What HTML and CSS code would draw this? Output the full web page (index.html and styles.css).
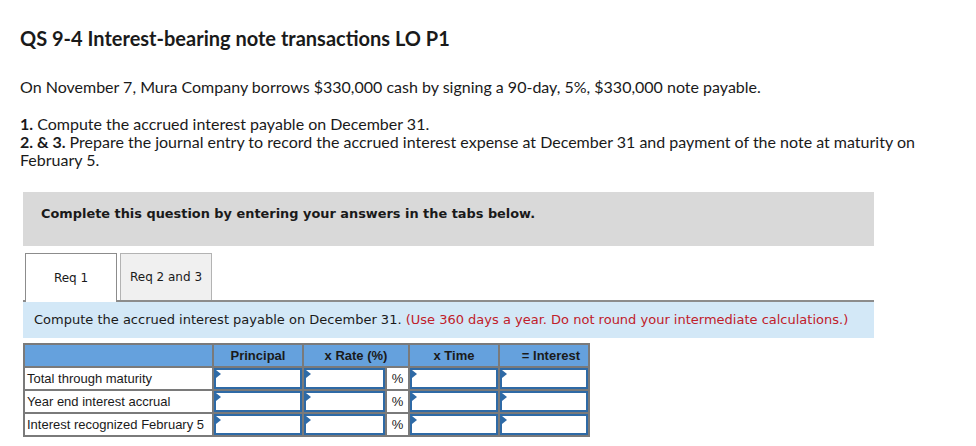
FILE: index.html
```html
<!DOCTYPE html>
<html>
<head>
<meta charset="utf-8">
<link rel="stylesheet" href="styles.css">
</head>
<body>
<div class="page">
  <h1 class="title">QS 9-4 Interest-bearing note transactions LO P1</h1>
  <p class="intro">On November 7, Mura Company borrows $330,000 cash by signing a 90-day, 5%, $330,000 note payable.</p>
  <div class="reqs">
    <p><b>1.</b> Compute the accrued interest payable on December 31.</p>
    <p><b>2. &amp; 3.</b> Prepare the journal entry to record the accrued interest expense at December 31 and payment of the note at maturity on February 5.</p>
  </div>
  <div class="box">
    <div class="banner">Complete this question by entering your answers in the tabs below.</div>
    <div class="tabs">
      <div class="tab active">Req 1</div>
      <div class="tab">Req 2 and 3</div>
    </div>
    <div class="instr">Compute the accrued interest payable on December 31. <span class="red">(Use 360 days a year. Do not round your intermediate calculations.)</span></div>
    <table class="calc">
      <colgroup>
        <col class="c-lbl">
        <col class="c-in">
        <col class="c-rate">
        <col class="c-pct">
        <col class="c-in">
        <col class="c-in">
      </colgroup>
      <tr class="head">
        <th></th>
        <th>Principal</th>
        <th colspan="2">x Rate (%)</th>
        <th>x Time</th>
        <th class="eq">= Interest</th>
      </tr>
      <tr>
        <td class="lbl">Total through maturity</td>
        <td class="in"></td>
        <td class="in"></td>
        <td class="pct">%</td>
        <td class="in"></td>
        <td class="in"></td>
      </tr>
      <tr>
        <td class="lbl">Year end interest accrual</td>
        <td class="in"></td>
        <td class="in"></td>
        <td class="pct">%</td>
        <td class="in"></td>
        <td class="in"></td>
      </tr>
      <tr>
        <td class="lbl">Interest recognized February 5</td>
        <td class="in"></td>
        <td class="in"></td>
        <td class="pct">%</td>
        <td class="in"></td>
        <td class="in"></td>
      </tr>
    </table>
  </div>
</div>
</body>
</html>
```

FILE: styles.css
```css
html, body {
  margin: 0;
  padding: 0;
  background: #ffffff;
}
.page {
  padding: 26px 0 0 20px;
  color: #1a1a1a;
  font-family: "Lato", "Open Sans", sans-serif;
}
.title {
  margin: 0;
  font-size: 20px;
  line-height: 24px;
  font-weight: 700;
  color: #1a1a1a;
}
.intro {
  margin: 28px 0 0 0;
  font-size: 16px;
  line-height: 18px;
}
.reqs {
  margin-top: 19px;
  font-size: 16px;
  line-height: 18px;
  padding-right: 60px;
}
.reqs p {
  margin: 0;
}
.box {
  margin: 23px 0 0 3px;
  width: 851px;
}
.banner {
  background: #d9d9d9;
  height: 54px;
  box-sizing: border-box;
  padding: 14px 0 0 18px;
  font-family: "DejaVu Sans", Verdana, sans-serif;
  font-weight: 700;
  font-size: 12.9px;
  color: #1a1a1a;
}
.tabs {
  display: flex;
  gap: 3px;
  margin-top: 7px;
  padding-left: 2px;
  border-bottom: 2px solid #8c8c8c;
}
.tab {
  width: 92px;
  height: 47px;
  box-sizing: border-box;
  border: 1px solid #b3b3b3;
  border-bottom: none;
  background: #f0f0f0;
  font-family: "DejaVu Sans", Verdana, sans-serif;
  font-size: 12px;
  display: flex;
  align-items: center;
  justify-content: center;
  color: #1a1a1a;
}
.tab.active {
  background: #ffffff;
  border-color: #8c8c8c;
  margin-bottom: -2px;
  height: 49px;
}
.instr {
  background: #d3e8f7;
  height: 36px;
  box-sizing: border-box;
  padding: 10px 0 0 11px;
  font-family: "DejaVu Sans", Verdana, sans-serif;
  font-size: 13px;
  color: #1a1a1a;
}
.red {
  color: #c0202a;
}
.calc {
  margin-top: 5px;
  border-collapse: collapse;
  table-layout: fixed;
  width: 567px;
  font-family: "Liberation Sans", Arial, sans-serif;
  font-size: 13px;
}
.c-lbl { width: 189px; }
.c-in { width: 90px; }
.c-rate { width: 83px; }
.c-pct { width: 23px; }
.calc th {
  background: #65a1dd;
  border: 2px solid #7a7a7a;
  height: 21px;
  padding: 0;
  font-weight: 700;
  color: #1a1a1a;
  text-align: center;
}
.calc th.eq {
  text-align: right;
  padding-right: 8px;
}
.calc td {
  border: 2px solid #7a7a7a;
  height: 21px;
  padding: 0;
}
.calc td.lbl {
  padding-left: 2px;
  color: #1a1a1a;
  white-space: nowrap;
}
.calc td.in {
  position: relative;
  background: #ffffff;
  box-shadow: inset 0 0 0 2px #2e6aa6;
}
.calc td.in::before {
  content: "";
  position: absolute;
  left: 2px;
  top: 2px;
  border-top: 4px solid transparent;
  border-bottom: 4px solid transparent;
  border-left: 5px solid #2e6aa6;
}
.calc td.pct {
  text-align: center;
  color: #1a1a1a;
}
```
